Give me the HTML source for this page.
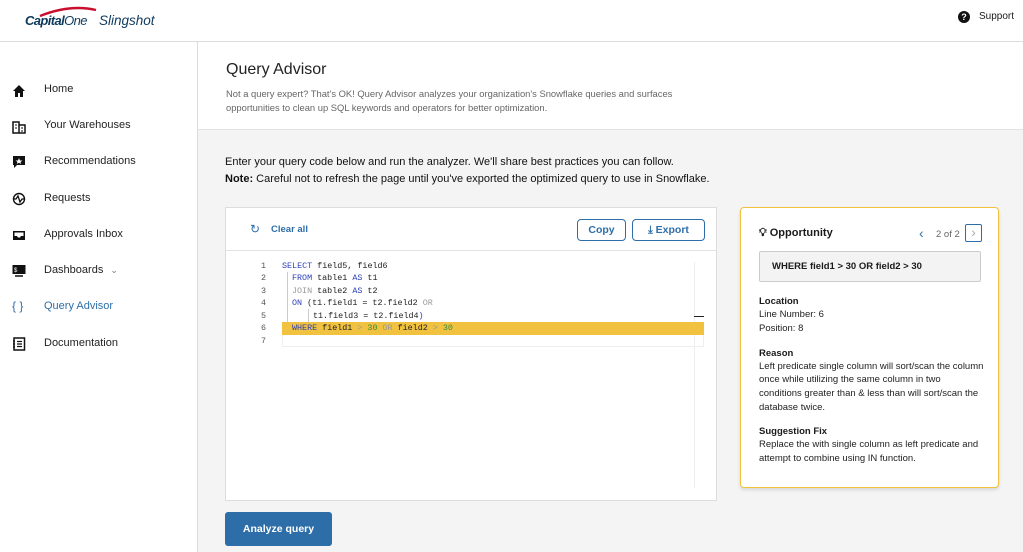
<!DOCTYPE html>
<html><head><style>
*{box-sizing:border-box;margin:0;padding:0}
body{width:1023px;height:552px;overflow:hidden;font-family:"Liberation Sans",sans-serif;color:#1a1a1a;background:#f4f4f4;position:relative}
.hdr{position:absolute;left:0;top:0;width:1023px;height:42px;background:#fff;border-bottom:1px solid #dcdcdc;box-shadow:0 1px 2px rgba(0,0,0,.06)}
.side{position:absolute;left:0;top:42px;width:198px;height:510px;background:#fff;border-right:1px solid #dcdcdc}
.nav{position:absolute;left:44px;font-size:11px;color:#222}
.ic{position:absolute;left:12px;width:14px;height:14px}
.top{position:absolute;left:198px;top:42px;width:825px;height:88px;background:#fff;border-bottom:1px solid #e2e2e2}
.mono{font-family:"Liberation Mono",monospace;font-size:8.4px}
.ln{position:absolute;left:256px;width:10px;text-align:right;color:#555}
.cd{position:absolute;color:#222;white-space:pre}
.k{color:#2b3fb8}.g{color:#999}.n{color:#3a8a3a}
.btn{position:absolute;border:1px solid #2e6ea8;border-radius:4px;color:#2e6ea8;font-size:10.5px;font-weight:bold;text-align:center;line-height:20px;background:#fff}
.card p{font-size:9.5px;line-height:13.8px;color:#222}
.card b{font-size:9.5px;display:block;line-height:13px}
</style></head><body>
<div class="hdr">
 <svg style="position:absolute;left:30px;top:6px" width="70" height="12"><path d="M10 10 Q40 -2 66 4" stroke="#c8102e" stroke-width="2.4" fill="none"/></svg>
 <div style="position:absolute;left:25px;top:13px;font-size:13px;color:#0e3a5e;font-weight:bold;font-style:italic;letter-spacing:-.6px">Capital<span style="font-weight:normal">One</span></div>
 <div style="position:absolute;left:99px;top:13px;font-size:13.5px;color:#0e3a5e;font-style:italic">Slingshot</div>
 <div style="position:absolute;left:958px;top:11px;width:12px;height:12px;border-radius:50%;background:#111;color:#fff;font-size:9px;text-align:center;line-height:12px;font-weight:bold">?</div>
 <div style="position:absolute;left:979px;top:11px;font-size:10px">Support</div>
</div>
<div class="side">
 <svg class="ic" style="top:42px" viewBox="0 0 14 14"><path d="M7 1 L1 7 H3 V13 H6 V9 H8 V13 H11 V7 H13 Z" fill="#111"/></svg><div class="nav" style="top:41px">Home</div>
 <svg class="ic" style="top:78px" viewBox="0 0 14 14"><path d="M1 2 H7 V13 H1 Z M7 5 H13 V13 H7 Z" fill="none" stroke="#111" stroke-width="1.5"/><path d="M3 5h2M3 8h2M9 8h2M9 11h2" stroke="#111"/></svg><div class="nav" style="top:77px">Your Warehouses</div>
 <svg class="ic" style="top:113px" viewBox="0 0 14 14"><path d="M1 1 H13 V10 H5 L2 13 V10 H1 Z" fill="#111"/><path d="M7 3 L8 5.5 L10.5 5.5 L8.5 7 L9.2 9 L7 7.8 L4.8 9 L5.5 7 L3.5 5.5 L6 5.5 Z" fill="#fff"/></svg><div class="nav" style="top:113px">Recommendations</div>
 <svg class="ic" style="top:150px" viewBox="0 0 14 14"><circle cx="7" cy="7" r="5.5" fill="none" stroke="#111" stroke-width="1.4"/><path d="M1 7 H4 L6 4 L8 10 L10 7 H13" fill="none" stroke="#111" stroke-width="1.3"/></svg><div class="nav" style="top:150px">Requests</div>
 <svg class="ic" style="top:186px" viewBox="0 0 14 14"><path d="M1 3 H13 V12 H1 Z" fill="#111"/><path d="M2.5 4.5 H11.5 V8 H9 L8 9.5 H6 L5 8 H2.5 Z" fill="#fff"/></svg><div class="nav" style="top:186px">Approvals Inbox</div>
 <svg class="ic" style="top:222px" viewBox="0 0 14 14"><rect x="0.5" y="1" width="13" height="9" fill="#111"/><path d="M3 12 H11" stroke="#111" stroke-width="1.5"/><text x="2" y="8" font-size="6" fill="#fff" font-family="Liberation Sans">$</text></svg><div class="nav" style="top:222px">Dashboards <span style="color:#777;font-size:9px;margin-left:4px">&#8964;</span></div>
 <div style="position:absolute;left:12px;top:257px;font-size:12px;color:#2e6ea8">{ }</div><div class="nav" style="top:258px;color:#2e6ea8">Query Advisor</div>
 <svg class="ic" style="top:295px" viewBox="0 0 14 14"><rect x="2" y="1" width="10.5" height="12" fill="none" stroke="#111" stroke-width="1.5"/><path d="M5 4.5h5M5 7h5M5 9.5h5M1 4h2M1 7h2M1 10h2" stroke="#111" stroke-width="1.2"/></svg><div class="nav" style="top:295px">Documentation</div>
</div>
<div class="top">
 <div style="position:absolute;left:28px;top:19px;font-size:16px;color:#222">Query Advisor</div>
 <div style="position:absolute;left:28px;top:45px;font-size:9.4px;color:#666;line-height:13.5px;width:480px">Not a query expert? That's OK! Query Advisor analyzes your organization's Snowflake queries and surfaces opportunities to clean up SQL keywords and operators for better optimization.</div>
</div>
<div style="position:absolute;left:225px;top:154px;font-size:11px;line-height:17px;color:#111">Enter your query code below and run the analyzer. We'll share best practices you can follow.<br><b>Note:</b> Careful not to refresh the page until you've exported the optimized query to use in Snowflake.</div>
<div style="position:absolute;left:225px;top:207px;width:492px;height:294px;background:#fff;border:1px solid #ddd">
 <div style="position:absolute;left:0;top:0;width:490px;height:43px;border-bottom:1px solid #e2e2e2"></div>
 <div style="position:absolute;left:24px;top:14px;font-size:12px;color:#2e6ea8">&#x21BB;</div>
 <div style="position:absolute;left:45px;top:16px;font-size:9.5px;font-weight:bold;color:#2e6ea8">Clear all</div>
</div>
<div class="btn" style="left:577px;top:219px;width:49px;height:22px">Copy</div>
<div class="btn" style="left:632px;top:219px;width:73px;height:22px">&#x2913; Export</div>
<div style="position:absolute;left:694px;top:262px;width:12px;height:226px;border-left:1px solid #eee"></div>
<div style="position:absolute;left:694px;top:316px;width:10px;height:1px;background:#222"></div>
<div style="position:absolute;left:282px;top:322px;width:422px;height:13px;background:#f0c240"></div>
<div style="position:absolute;left:282px;top:335px;width:422px;height:12px;border:1px solid #eee;border-top:none"></div>
<div style="position:absolute;left:287px;top:272px;width:1px;height:50px;background:#ccc"></div>
<div style="position:absolute;left:308px;top:309px;width:1px;height:13px;background:#ccc"></div>
<div class="mono">
 <div class="ln" style="top:261px">1</div><div class="cd" style="left:282px;top:261px"><span class="k">SELECT</span> field5, field6</div>
 <div class="ln" style="top:273px">2</div><div class="cd" style="left:292px;top:273px"><span class="k">FROM</span> table1 <span class="k">AS</span> t1</div>
 <div class="ln" style="top:286px">3</div><div class="cd" style="left:292px;top:286px"><span class="g">JOIN</span> table2 <span class="k">AS</span> t2</div>
 <div class="ln" style="top:298px">4</div><div class="cd" style="left:292px;top:298px"><span class="k">ON</span> (t1.field1 = t2.field2 <span class="g">OR</span></div>
 <div class="ln" style="top:311px">5</div><div class="cd" style="left:313px;top:311px">t1.field3 = t2.field4<span class="k">)</span></div>
 <div class="ln" style="top:323px">6</div><div class="cd" style="left:292px;top:323px"><span class="k">WHERE</span> field1 <span class="g">&gt;</span> <span class="n">30</span> <span class="g">OR</span> field2 <span class="g">&gt;</span> <span class="n">30</span></div>
 <div class="ln" style="top:336px">7</div>
</div>
<div class="card" style="position:absolute;left:740px;top:207px;width:259px;height:281px;background:#fff;border:1.5px solid #f0c240;border-radius:4px;box-shadow:0 2px 3px rgba(0,0,0,.12)">
 <div style="position:absolute;left:18px;top:19px;font-size:11px;font-weight:bold">&#x1F4A1;&#xFE0E; Opportunity</div>
 <div style="position:absolute;left:178px;top:17px;font-size:14px;color:#2e6ea8">&#8249;</div>
 <div style="position:absolute;left:195px;top:21px;font-size:9.5px;color:#666">2 of 2</div>
 <div style="position:absolute;left:224px;top:16px;width:17px;height:18px;border:1.5px solid #2e6ea8;border-radius:2px;color:#aaa;text-align:center;font-size:14px;line-height:14px">&#8250;</div>
 <div style="position:absolute;left:18px;top:43px;width:222px;height:31px;background:#f3f3f3;border:1px solid #ccc;border-radius:2px;font-size:9.5px;font-weight:bold;line-height:29px;padding-left:12px">WHERE field1 &gt; 30 OR field2 &gt; 30</div>
 <div style="position:absolute;left:18px;top:87px;width:226px">
  <b>Location</b><p>Line Number: 6<br>Position: 8</p>
  <div style="height:11px"></div>
  <b>Reason</b><p>Left predicate single column will sort/scan the column once while utilizing the same column in two conditions greater than &amp; less than will sort/scan the database twice.</p>
  <div style="height:10px"></div>
  <b>Suggestion Fix</b><p>Replace the with single column as left predicate and attempt to combine using IN function.</p>
 </div>
</div>
<div style="position:absolute;left:225px;top:512px;width:107px;height:34px;background:#2e6ea8;border-radius:3px;color:#fff;font-size:10.5px;font-weight:bold;text-align:center;line-height:34px">Analyze query</div>
</body></html>
